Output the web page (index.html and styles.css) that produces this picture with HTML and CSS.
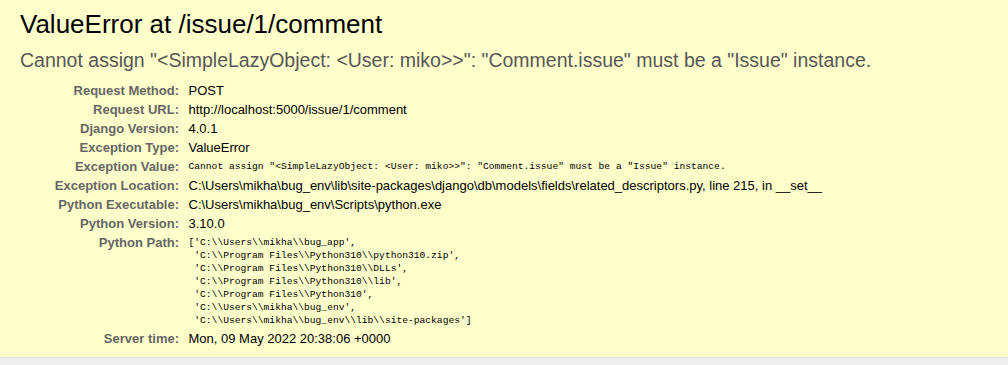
FILE: index.html
```html
<!DOCTYPE html>
<html lang="en">
<head>
  <meta charset="UTF-8">
  <title>ValueError at /issue/1/comment</title>
  <link rel="stylesheet" href="styles.css">
</head>
<body>
  <div id="summary">
    <h1>ValueError at /issue/1/comment</h1>
    <pre class="exception_value">Cannot assign "&lt;SimpleLazyObject: &lt;User: miko&gt;&gt;": "Comment.issue" must be a "Issue" instance.</pre>
    <table class="meta">
      <tr>
        <th>Request Method:</th>
        <td>POST</td>
      </tr>
      <tr>
        <th>Request URL:</th>
        <td>http://localhost:5000/issue/1/comment</td>
      </tr>
      <tr>
        <th>Django Version:</th>
        <td>4.0.1</td>
      </tr>
      <tr>
        <th>Exception Type:</th>
        <td>ValueError</td>
      </tr>
      <tr>
        <th>Exception Value:</th>
        <td><pre>Cannot assign "&lt;SimpleLazyObject: &lt;User: miko&gt;&gt;": "Comment.issue" must be a "Issue" instance.</pre></td>
      </tr>
      <tr>
        <th>Exception Location:</th>
        <td>C:\Users\mikha\bug_env\lib\site-packages\django\db\models\fields\related_descriptors.py, line 215, in __set__</td>
      </tr>
      <tr>
        <th>Python Executable:</th>
        <td>C:\Users\mikha\bug_env\Scripts\python.exe</td>
      </tr>
      <tr>
        <th>Python Version:</th>
        <td>3.10.0</td>
      </tr>
      <tr>
        <th>Python Path:</th>
        <td><pre>['C:\\Users\\mikha\\bug_app',
 'C:\\Program Files\\Python310\\python310.zip',
 'C:\\Program Files\\Python310\\DLLs',
 'C:\\Program Files\\Python310\\lib',
 'C:\\Program Files\\Python310',
 'C:\\Users\\mikha\\bug_env',
 'C:\\Users\\mikha\\bug_env\\lib\\site-packages']</pre></td>
      </tr>
      <tr>
        <th>Server time:</th>
        <td>Mon, 09 May 2022 20:38:06 +0000</td>
      </tr>
    </table>
  </div>
  <div id="traceback"></div>
</body>
</html>
```

FILE: styles.css
```css
html * { padding: 0; margin: 0; }
body {
  font: 13px "Liberation Sans", Arial, sans-serif;
  background: #eee;
  color: #000;
}
body > div {
  padding: 10px 20px 9px;
  border-bottom: 1px solid #ddd;
}
h1 {
  font-size: 26px;
  font-weight: normal;
  line-height: 28px;
}
#summary { background: #ffc; }
#summary .exception_value {
  font-family: "Liberation Sans", Arial, sans-serif;
  font-size: 19.5px;
  line-height: 23px;
  color: #575757;
  margin: 11px 0 9px;
  white-space: pre-wrap;
}
pre {
  font-family: "Liberation Mono", "Courier New", monospace;
  font-size: 9.65px;
  line-height: 13px;
  white-space: pre-wrap;
}
table.meta {
  border: none;
  border-collapse: collapse;
  background: transparent;
}
table.meta td, table.meta th {
  vertical-align: top;
  padding: 2px 3px;
  line-height: 15px;
}
table.meta th {
  width: 12em;
  text-align: right;
  color: #666;
  padding-right: 6.5px;
}
table.meta td pre { padding-top: 1px; }
#traceback { background: #eee; border-bottom: none; }
```
